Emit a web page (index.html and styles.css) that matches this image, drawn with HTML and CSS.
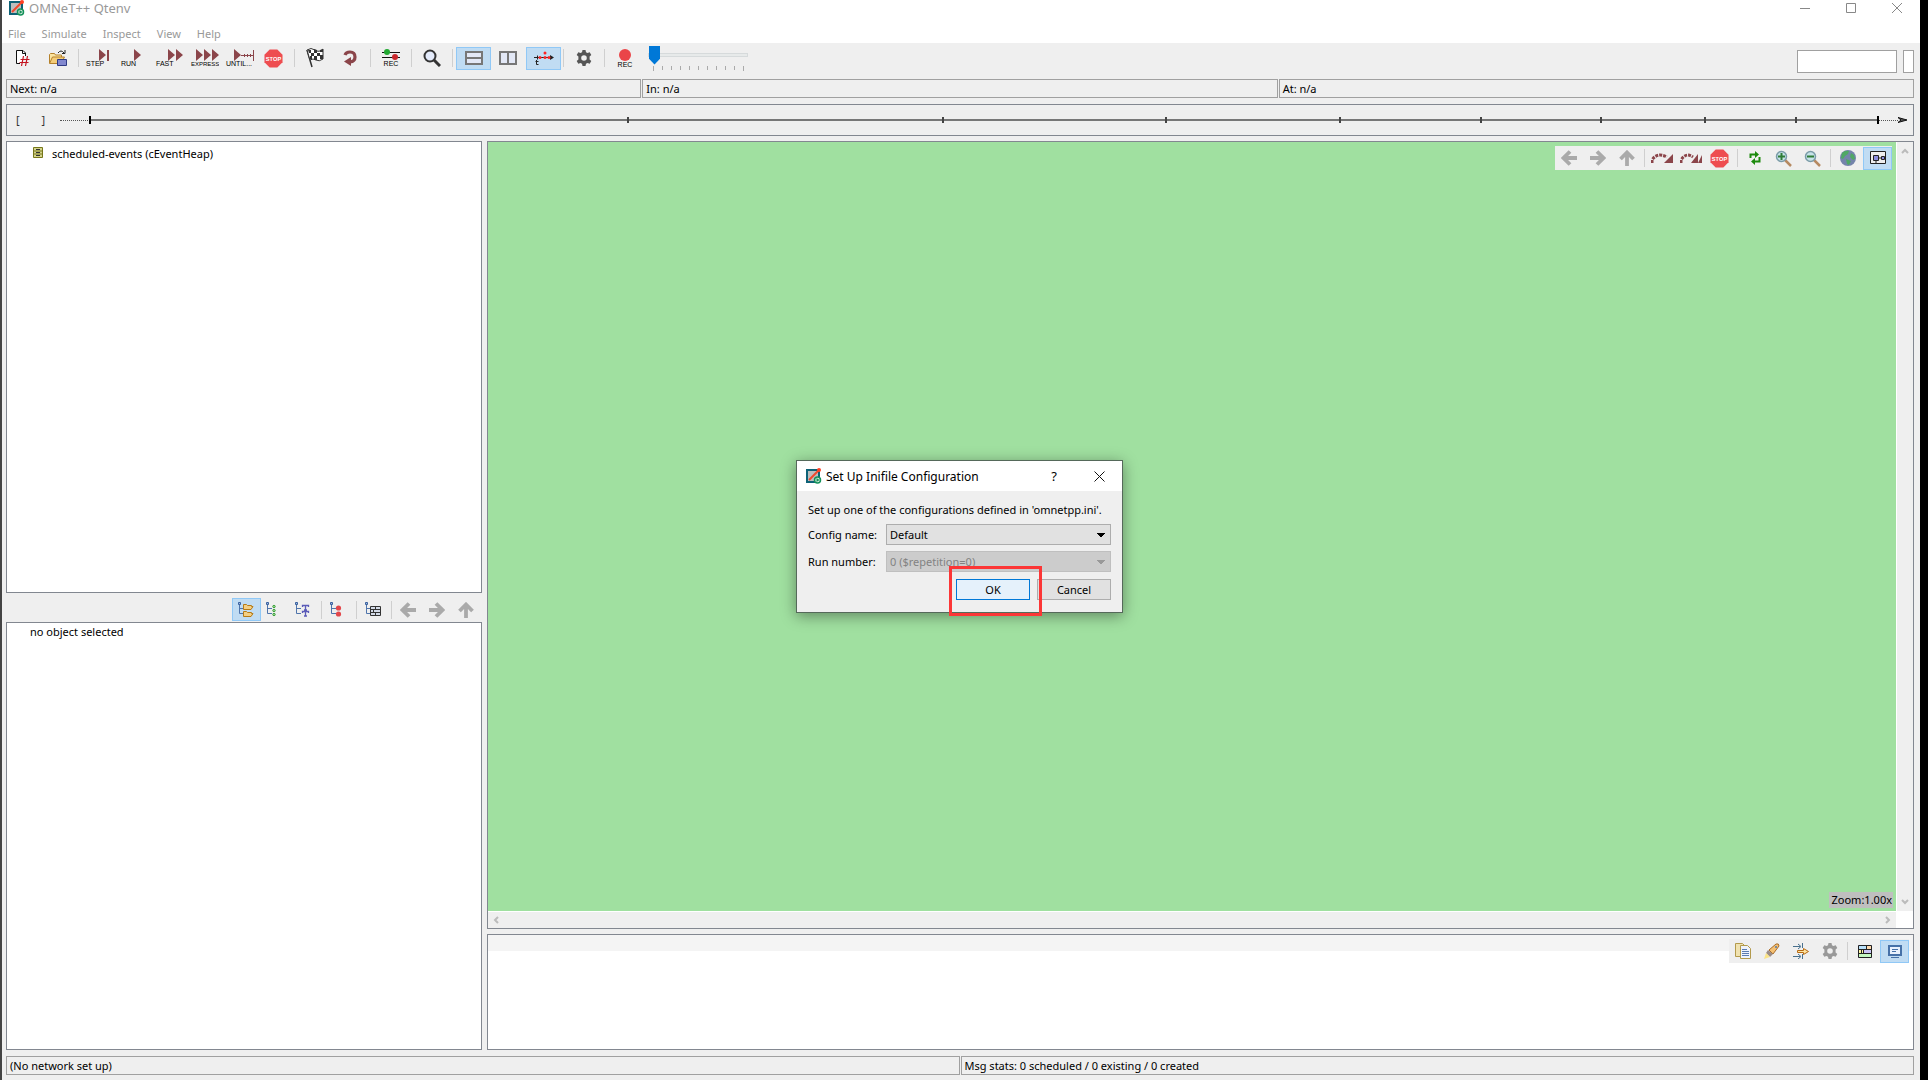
FILE: index.html
```
<!DOCTYPE html>
<html lang="en">
<head>
    <meta charset="UTF-8">
    <meta name="viewport" content="width=device-width, initial-scale=1.0">
    <title>OMNeT++ Qtenv</title>
    <link rel="stylesheet" href="styles.css">
</head>
<body>
    <!-- Icons used more than once -->
    <svg class="sprite" aria-hidden="true">
        <symbol id="app" viewBox="0 0 16 16">
            <path d="M1 2h12v12H1z" fill="#bdbdbd" stroke="#0d6277" stroke-width="2"/>
            <path d="M3 12L8 7l5-5" fill="none" stroke="#f0492c" stroke-width="2"/>
            <circle cx="13" cy="2" r="2" fill="#ff4024"/>
            <circle cx="11.500" cy="12" r="3" fill="#d8eadf" stroke="#14915a" stroke-width="1.500"/>
            <path d="M10.500 10v4l3-2z" fill="#14915a"/>
        </symbol>
        <symbol id="stop" viewBox="0 0 20 20">
            <path d="M6 .5h8l5.500 5.500v8L14 19.500H6L.5 14V6z" fill="#ee4d50"/>
            <text x="10" y="12.500" font-size="6" font-weight="bold" fill="#fff" text-anchor="middle" font-family="Liberation Sans, sans-serif">STOP</text>
        </symbol>
        <symbol id="left" viewBox="0 0 16 16">
            <path d="M9 1.500L2.500 8 9 14.500M3 8h13" fill="none" stroke="#aaa" stroke-width="3.800"/>
        </symbol>
        <symbol id="right" viewBox="0 0 16 16">
            <path d="M7 1.500L13.500 8 7 14.500M13 8H0" fill="none" stroke="#aaa" stroke-width="3.800"/>
        </symbol>
        <symbol id="up" viewBox="0 0 16 16">
            <path d="M1.500 9L8 2.500 14.500 9M8 3v13" fill="none" stroke="#aaa" stroke-width="3.800"/>
        </symbol>
        <symbol id="gear" viewBox="0 0 16 16">
            <path d="M6.500 0h3l.5 2.300 1.500.8 2.200-.8 1.600 2.700-1.700 1.500v3l1.700 1.500-1.600 2.700-2.200-.8-1.500.8-.5 2.300h-3L6 13.700l-1.500-.8-2.200.8L.7 11l1.700-1.500v-3L.7 5l1.600-2.700 2.200.8L6 2.300zM8 5.200a2.800 2.800 0 1 0 0 5.600 2.800 2.800 0 0 0 0-5.600z" fill="currentColor" fill-rule="evenodd"/>
        </symbol>
        <symbol id="tree" viewBox="0 0 10 14">
            <path d="M1.500 2v9.500H6M1.500 6.500H6" fill="none" stroke="#4f74ab"/>
            <path d="M.5.5h2v2h-2z" fill="#9db7dc" stroke="#3b62a0"/>
        </symbol>
    </svg>

    <div class="window">
        <header class="titlebar">
            <svg class="app-icon"><use href="#app"/></svg>
            <h1>OMNeT++ Qtenv</h1>
            <div class="window-buttons">
                <button type="button" aria-label="Minimize"><svg width="10" height="10" viewBox="0 0 10 10"><path d="M0 5.500h10" stroke="#888"/></svg></button>
                <button type="button" aria-label="Maximize"><svg width="10" height="10" viewBox="0 0 10 10"><path d="M.5.5h9v9h-9z" fill="none" stroke="#888"/></svg></button>
                <button type="button" aria-label="Close"><svg width="10" height="10" viewBox="0 0 10 10"><path d="M0 0l10 10M10 0L0 10" stroke="#888"/></svg></button>
            </div>
        </header>

        <nav class="menubar">
            <a href="#">File</a>
            <a href="#">Simulate</a>
            <a href="#">Inspect</a>
            <a href="#">View</a>
            <a href="#">Help</a>
        </nav>

        <div class="toolbar main-toolbar">
            <button type="button" aria-label="New network"><svg width="16" height="18" viewBox="0 0 16 18"><path d="M5 14.500H1.500v-13H8L10.500 4v3" fill="#fff" stroke="#111"/><path d="M7.500 1.500v3h3" fill="none" stroke="#111"/><path d="M8.500 7L6.500 17M12.500 7l-2 10M5.500 10.500h9M4.500 13.500h9" stroke="#c41420" stroke-width="1.200"/></svg></button>
            <button type="button" aria-label="Open ini file"><svg width="18" height="17" viewBox="0 0 18 17"><path d="M.5 13V4.500l1-1h4l1 1.500h6V7" fill="#fbe4a0" stroke="#b5812b"/><path d="M.5 13.500L3.500 7h12L12 13.500z" fill="#f5cd78" stroke="#b5812b"/><path d="M9 3q3-4 6 0M13 3.500h3V0" fill="none" stroke="#222"/><path d="M8.500 9.500h9v6h-9z" fill="#8288cf" stroke="#2f3b84"/></svg></button>
            <span class="sep"></span>
            <button type="button" aria-label="Step"><svg class="run-icon" viewBox="0 0 30 18"><path d="M15 0l7 6-7 6zM23 1h2v11h-2z" fill="#8b454a"/><text x="2" y="17">STEP</text></svg></button>
            <button type="button" aria-label="Run"><svg class="run-icon" viewBox="0 0 30 18"><path d="M15 0l7 6-7 6z" fill="#8b454a"/><text x="2" y="17">RUN</text></svg></button>
            <button type="button" aria-label="Fast"><svg class="run-icon" viewBox="0 0 30 18"><path d="M14 0l7 6-7 6zM22 0l7 6-7 6z" fill="#8b454a"/><text x="2" y="17">FAST</text></svg></button>
            <button type="button" aria-label="Express"><svg class="run-icon" viewBox="0 0 30 18"><path d="M7 0l7 6-7 6zM15 0l7 6-7 6zM23 0l7 6-7 6z" fill="#8b454a"/><text class="small" x="2" y="17">EXPRESS</text></svg></button>
            <button type="button" aria-label="Run until"><svg class="run-icon" viewBox="0 0 30 18"><path d="M10 0l7 6-7 6zM29 1h1v11h-1z" fill="#8b454a"/><path d="M17 6.500h12M20.500 5v3M23.500 5v3M26.500 5v3" stroke="#8b454a"/><text x="2" y="17">UNTIL...</text></svg></button>
            <button type="button" aria-label="Stop"><svg width="19" height="19"><use href="#stop"/></svg></button>
            <span class="sep"></span>
            <button type="button" aria-label="Finish"><svg width="18" height="20" viewBox="0 0 18 20"><path d="M1 2l5 17" stroke="#333" stroke-width="1.500"/><path d="M1 2q4-3 8 0t8-1v10q-4 3-7 1t-6 0z" fill="#fff" stroke="#333"/><path d="M2 2h3v3H3zM8 1l3 1v3H8zM14 2l3-1v3h-3zM5 5h3v3H5zM11 5h3v3h-3zM4 8h2v3H4zM8 8h3v4H8zM14 7h3v4h-3z" fill="#333"/></svg></button>
            <button type="button" aria-label="Rebuild network"><svg width="14" height="16" viewBox="0 0 14 16"><path d="M2 5q1-3 5-3 5 0 5 5 0 4.500-5 5" fill="none" stroke="#8b454a" stroke-width="3.200"/><path d="M8 7v9l-7-4.500z" fill="#8b454a"/></svg></button>
            <span class="sep"></span>
            <button type="button" aria-label="Eventlog settings"><svg width="18" height="20" viewBox="0 0 18 20"><path d="M0 4.500h18M0 9.500h18" stroke="#111"/><circle cx="5" cy="4" r="3" fill="#22a932"/><circle cx="13" cy="9" r="3" fill="#c9282d"/><text class="icon-text" x="9" y="18" text-anchor="middle">REC</text></svg></button>
            <span class="sep"></span>
            <button type="button" aria-label="Find"><svg width="18" height="18" viewBox="0 0 18 18"><circle cx="7" cy="7" r="5.500" fill="#e4ebfb" stroke="#333" stroke-width="2"/><path d="M11 11l6 6" stroke="#333" stroke-width="3"/></svg></button>
            <span class="sep"></span>
            <button type="button" class="active" aria-label="Horizontal layout"><svg width="18" height="14" viewBox="0 0 18 14"><path d="M1 1h16v12H1zM1 7h16" fill="#e3e8f6" stroke="#777" stroke-width="2"/></svg></button>
            <button type="button" aria-label="Vertical layout"><svg width="18" height="14" viewBox="0 0 18 14"><path d="M1 1h16v12H1zM9 1v12" fill="#e3e8f6" stroke="#777" stroke-width="2"/></svg></button>
            <button type="button" class="active" aria-label="Timeline"><svg width="20" height="14" viewBox="0 0 20 14"><path d="M0 6.500h17" stroke="#222"/><path d="M16 4l4 2.500-4 2.500z" fill="#222"/><circle cx="6" cy="6.500" r="1.500" fill="#f22"/><circle cx="11" cy="6.500" r="1.500" fill="#f22"/><circle cx="15" cy="6.500" r="1.500" fill="#f22"/><circle cx="11" cy="2" r="1.500" fill="#f22"/><path d="M3.500 4.500v4M1.500 10.500h3M2.500 9v4.500h2" fill="none" stroke="#222"/></svg></button>
            <span class="sep"></span>
            <button type="button" class="dark" aria-label="Preferences"><svg width="16" height="16"><use href="#gear"/></svg></button>
            <span class="sep"></span>
            <button type="button" aria-label="Record video"><svg width="18" height="20" viewBox="0 0 18 20"><circle cx="9" cy="7" r="6" fill="#ea4548"/><text class="icon-text" x="9" y="19" text-anchor="middle">REC</text></svg></button>
            <div class="speed">
                <input type="range" min="0" max="10" value="0" aria-label="Animation speed">
                <svg width="92" height="5" viewBox="0 0 92 5"><path d="M.5 0v5M9.500 0v4M18.500 0v4M27.500 0v4M36.500 0v4M45.500 0v4M54.500 0v4M63.500 0v4M72.500 0v4M81.500 0v4M90.500 0v5" stroke="#aaa"/></svg>
            </div>
            <input type="text" class="sim-time" aria-label="Simulation time">
            <input type="text" class="event-no" aria-label="Event number">
        </div>

        <div class="status-row next-event">
            <div>Next: n/a</div>
            <div>In: n/a</div>
            <div>At: n/a</div>
        </div>

        <div class="timeline">
            <div class="brackets"><span>[</span><span>]</span></div>
            <span class="dots"></span>
            <div class="axis">
                <i class="end" style="left: 0%"></i>
                <i style="left: 30.1%"></i>
                <i style="left: 47.7%"></i>
                <i style="left: 60.2%"></i>
                <i style="left: 69.9%"></i>
                <i style="left: 77.8%"></i>
                <i style="left: 84.5%"></i>
                <i style="left: 90.3%"></i>
                <i style="left: 95.4%"></i>
                <i class="end" style="left: 100%"></i>
            </div>
            <span class="dots short"></span>
            <svg width="10" height="6" viewBox="0 0 10 6"><path d="M0 .5L9 3 0 5.500 3 3z" fill="#555" stroke="#111"/></svg>
        </div>

        <main class="panes">
            <aside class="side">
                <section class="panel object-tree">
                    <svg width="10" height="11" viewBox="0 0 10 11"><path d="M.5.5h9v10h-9zM0 4h10M0 7h10" fill="#d4d48c" stroke="#77771a"/><path d="M3 2.500h4M3 5.500h4M3 8.500h4" stroke="#333"/></svg>
                    <span>scheduled-events (cEventHeap)</span>
                </section>
                <div class="toolbar mini side-toolbar">
                    <button type="button" class="active" aria-label="Grouped"><svg width="16" height="16" viewBox="0 0 16 16"><use href="#tree" width="10" height="14"/><path d="M5.500 7.500v-5h3l1 1h4v1h1.500l-2 3zM5.500 14.500v-5h3l1 1h4v1h1.500l-2 3z" fill="#f4cf83" stroke="#b57a16"/></svg></button>
                    <button type="button" aria-label="Children"><svg width="16" height="16" viewBox="0 0 16 16"><use href="#tree" width="10" height="14"/><g fill="#a8e0a0" stroke="#369c36"><circle cx="8" cy="4.500" r="1.200"/><circle cx="8" cy="8.500" r="1.200"/><circle cx="8" cy="12.500" r="1.200"/></g></svg></button>
                    <button type="button" aria-label="Inheritance"><svg width="16" height="16" viewBox="0 0 16 16"><use href="#tree" width="10" height="14"/><path d="M7.500 5V3.500h6V5M10.500 3v5M9 8h3M7.500 11V9.500h6V11M10.500 9v5M9 14h3" fill="none" stroke="#5b5bb8" stroke-width="1.300"/></svg></button>
                    <span class="sep"></span>
                    <button type="button" aria-label="Flat"><svg width="16" height="16" viewBox="0 0 16 16"><use href="#tree" width="10" height="14"/><circle cx="8.500" cy="6" r="2.600" fill="#e3474b"/><circle cx="8.500" cy="12" r="2.600" fill="#e3474b"/></svg></button>
                    <span class="sep"></span>
                    <button type="button" aria-label="Table"><svg width="16" height="16" viewBox="0 0 16 16"><use href="#tree" width="10" height="14"/><path d="M5.500 4.500h10v9h-10zM5 7.500h11M5 10.500h11M10.500 4v3M8.500 7v3M10.500 10v4" fill="#d4dbe8" stroke="#333"/></svg></button>
                    <span class="sep"></span>
                    <button type="button" aria-label="Back"><svg width="16" height="16"><use href="#left"/></svg></button>
                    <button type="button" aria-label="Forward"><svg width="16" height="16"><use href="#right"/></svg></button>
                    <button type="button" aria-label="Parent"><svg width="16" height="16"><use href="#up"/></svg></button>
                </div>
                <section class="panel inspector">no object selected</section>
            </aside>

            <div class="content">
                <section class="panel network">
                    <div class="canvas">
                        <div class="toolbar mini floating">
                            <button type="button" aria-label="Back"><svg width="16" height="16"><use href="#left"/></svg></button>
                            <button type="button" aria-label="Forward"><svg width="16" height="16"><use href="#right"/></svg></button>
                            <button type="button" aria-label="Parent"><svg width="16" height="16"><use href="#up"/></svg></button>
                            <span class="sep"></span>
                            <button type="button" aria-label="Run until next event"><svg width="22" height="12" viewBox="0 0 22 12"><path d="M1 11V8q5-8 15-3" fill="none" stroke="#8b454a" stroke-width="3" stroke-dasharray="3 1"/><path d="M22 2v9h-9z" fill="#8b454a"/></svg></button>
                            <button type="button" aria-label="Fast run until next event"><svg width="22" height="12" viewBox="0 0 22 12"><path d="M1 11V8q5-8 12-3" fill="none" stroke="#8b454a" stroke-width="3" stroke-dasharray="3 1"/><path d="M18 2v9h-7zM22 3v8h-4z" fill="#8b454a"/></svg></button>
                            <button type="button" aria-label="Stop"><svg width="19" height="19"><use href="#stop"/></svg></button>
                            <span class="sep"></span>
                            <button type="button" aria-label="Re-layout"><svg width="12" height="14" viewBox="0 0 12 14"><path d="M1.500 7V3.500H7M10.500 6v4.500H5" fill="none" stroke="#1d8a0d" stroke-width="2"/><path d="M6 0l4 3.500L6 7zM6 7v7l-4-3.500z" fill="#1d8a0d"/></svg></button>
                            <button type="button" aria-label="Zoom in"><svg width="17" height="17" viewBox="0 0 17 17"><path d="M10 10l6 6" stroke="#b68a62" stroke-width="2.500"/><circle cx="6.500" cy="6.500" r="5" fill="#c6e2e8" stroke="#7b9ca8" stroke-width="1.500"/><path d="M3 6.500h7M6.500 3v7" stroke="#2f7c37" stroke-width="2"/></svg></button>
                            <button type="button" aria-label="Zoom out"><svg width="17" height="17" viewBox="0 0 17 17"><path d="M10 10l6 6" stroke="#b68a62" stroke-width="2.500"/><circle cx="6.500" cy="6.500" r="5" fill="#c6e2e8" stroke="#7b9ca8" stroke-width="1.500"/><path d="M3 6.500h7" stroke="#2f7c37" stroke-width="2"/></svg></button>
                            <span class="sep"></span>
                            <button type="button" aria-label="3D view"><svg width="16" height="16" viewBox="0 0 16 16"><circle cx="8" cy="8" r="8" fill="#7484ab"/><path d="M2 3q3-3 7-2L8 4 5 6 3 9 1 8zM11 3l3 2 1 4-2 1-3-3zM6 9l5 2-2 4-2-1z" fill="#4fa865"/></svg></button>
                            <button type="button" class="active" aria-label="2D view"><svg width="16" height="14" viewBox="0 0 16 14"><path d="M.5.5h15v12h-15z" fill="#eee" stroke="#222"/><path d="M3.500 4.500h5v5h-5zM11.500 5.500h3v3h-3zM9 7h2M6 10v3" fill="#8c8cdf" stroke="#222"/></svg></button>
                        </div>
                        <span class="zoom">Zoom:1.00x</span>
                    </div>
                    <div class="scroll vertical">
                        <svg width="8" height="6" viewBox="0 0 8 6"><path d="M1 5l3-3 3 3" fill="none" stroke="#bbb" stroke-width="2"/></svg>
                        <svg width="8" height="6" viewBox="0 0 8 6"><path d="M1 1l3 3 3-3" fill="none" stroke="#bbb" stroke-width="2"/></svg>
                    </div>
                    <div class="scroll horizontal">
                        <svg width="6" height="8" viewBox="0 0 6 8"><path d="M5 1L2 4l3 3" fill="none" stroke="#bbb" stroke-width="2"/></svg>
                        <svg width="6" height="8" viewBox="0 0 6 8"><path d="M1 1l3 3-3 3" fill="none" stroke="#bbb" stroke-width="2"/></svg>
                    </div>
                </section>
                <section class="panel log">
                    <div class="toolbar mini floating">
                        <button type="button" aria-label="Copy"><svg width="16" height="16" viewBox="0 0 16 16"><path d="M.5.5h7l2 2v11h-9z" fill="#f0e2b0" stroke="#b39a4c"/><path d="M5.500 2.500h7l3 3v10h-10z" fill="#eef3fc" stroke="#b39a4c"/><path d="M7 6.500h5M7 8.500h7M7 10.500h7M7 12.500h7" stroke="#5b7bb0"/></svg></button>
                        <button type="button" aria-label="Find"><svg width="16" height="16" viewBox="0 0 16 16"><path d="M5 7l7-6q3-1 3 2L9 11z" fill="#f5c173" stroke="#a96c28"/><path d="M4 7l5 4-3 3-4-4z" fill="#9b8d88"/><path d="M2 10l4 4-6 2z" fill="#fbe487"/><circle cx="12" cy="4" r="1" fill="#5579a8"/></svg></button>
                        <button type="button" aria-label="Filter"><svg width="16" height="16" viewBox="0 0 16 16"><path d="M0 3.500h7M0 13.500h7M5 1l3 2.500L5 6M5 11l3 2.500L5 16M9.500 0v5M9.500 11v5" fill="none" stroke="#48708d"/><path d="M4.500 7.500h6v-2l5 3-5 3v-2h-6z" fill="#ffe39c" stroke="#b66a14"/></svg></button>
                        <button type="button" class="grey" aria-label="Log settings"><svg width="16" height="16"><use href="#gear"/></svg></button>
                        <span class="sep"></span>
                        <button type="button" aria-label="Messages view"><svg width="14" height="13" viewBox="0 0 14 13"><path d="M0 0h14v13H0z" fill="#ccc5f6"/><path d="M1 1h8v3H1z" fill="#b9e0fa"/><path d="M9 1h4v3H9z" fill="#ffd9ae"/><path d="M1 4h4v4H1z" fill="#fff7a6"/><path d="M1 8h12v4H1z" fill="#c6fac2"/><path d="M.5.5h13v12H.5zM0 4.500h14M0 8.500h14M8.500 1v3M3.500 5v3M5.500 5v3" fill="none" stroke="#222"/></svg></button>
                        <button type="button" class="active" aria-label="Log view"><svg width="14" height="13" viewBox="0 0 14 13"><path d="M1 1h12v9H1z" fill="#e8f1fd" stroke="#4671a8" stroke-width="2"/><path d="M4 4.500h6M4 6.500h4M3 12.500h8" stroke="#4671a8"/></svg></button>
                    </div>
                </section>
            </div>
        </main>

        <footer class="status-row">
            <div>(No network set up)</div>
            <div>Msg stats: 0 scheduled / 0 existing / 0 created</div>
        </footer>
    </div>

    <div class="overlay">
        <form class="dialog" role="dialog" aria-labelledby="dialogTitle">
            <div class="dialog-title">
                <svg class="app-icon"><use href="#app"/></svg>
                <h2 id="dialogTitle">Set Up Inifile Configuration</h2>
                <button type="button" class="help">?</button>
                <button type="button" aria-label="Close"><svg width="11" height="11" viewBox="0 0 11 11"><path d="M.5.5l10 10M10.500.5l-10 10" stroke="#111"/></svg></button>
            </div>
            <div class="dialog-body">
                <p>Set up one of the configurations defined in 'omnetpp.ini'.</p>
                <label for="config">Config name:</label>
                <select id="config">
                    <option>Default</option>
                </select>
                <label for="run">Run number:</label>
                <select id="run" disabled>
                    <option>0 ($repetition=0)</option>
                </select>
                <div class="dialog-buttons">
                    <button type="submit" class="ok">OK</button>
                    <button type="button">Cancel</button>
                </div>
            </div>
        </form>
    </div>
</body>
</html>
```
FILE: styles.css
```
* {
    box-sizing: border-box;
}
body {
    margin: 0;
    height: 100vh;
    padding: 0 8px 0 2px;
    background: linear-gradient(to right, #444 50%, #000 50%);
    font-family: "Noto Sans", "Open Sans", sans-serif;
    font-size: 11px;
    line-height: 17px;
    color: #000;
    overflow: hidden;
}
button, input, select {
    font: inherit;
    color: inherit;
}
button {
    padding: 0;
    border: 0;
    background: none;
}
svg {
    display: block;
    flex: none;
}
h1, h2, p {
    margin: 0;
    font-weight: normal;
}
.sprite {
    display: none;
}
.app-icon {
    width: 16px;
    height: 16px;
}
.window {
    display: flex;
    flex-direction: column;
    height: 100%;
    padding-bottom: 5px;
    background: #efefef;
}

/* Title and menu */
.titlebar {
    display: flex;
    align-items: flex-start;
    gap: 4px;
    height: 24px;
    padding-left: 7px;
    background: #fff;
    color: #999;
}
.titlebar h1 {
    flex: 1;
    font-size: 13px;
    line-height: 16px;
}
.window-buttons {
    display: flex;
}
.window-buttons button {
    display: grid;
    place-items: center;
    width: 46px;
    height: 15px;
}
.menubar {
    display: flex;
    gap: 16px;
    height: 19px;
    padding: 1px 6px;
    background: #fff;
}
.menubar a {
    color: #999;
    text-decoration: none;
}

/* Toolbars */
.toolbar {
    display: flex;
    align-items: center;
}
.toolbar button {
    display: grid;
    place-items: center;
    flex: none;
    width: 35px;
    height: 23px;
    padding-right: 2px;
}
.toolbar.mini button {
    width: 29px;
}
.toolbar .active {
    padding: 0;
    background: #c0dcf3;
    border: 1px solid #90c8f6;
}
.toolbar .dark {
    color: #555;
}
.toolbar .grey {
    color: #999;
}
.sep {
    flex: none;
    width: 1px;
    height: 18px;
    margin: 0 3px 0 2px;
    background: #cfcfcf;
}
.main-toolbar {
    height: 36px;
    padding: 0 6px 6px 4px;
}
.run-icon {
    width: 30px;
    height: 18px;
}
.run-icon text, .icon-text {
    font-family: "Liberation Sans", sans-serif;
    font-size: 7px;
    fill: #000;
}
.run-icon .small {
    font-size: 6px;
}
.speed {
    display: flex;
    flex-direction: column;
    gap: 2px;
    margin: 0 auto 0 5px;
}
.speed svg {
    margin-left: 5px;
}
.speed input {
    display: block;
    width: 100px;
    height: 19px;
    margin: 0;
    background: none;
    appearance: none;
}
.speed input::-webkit-slider-runnable-track {
    height: 4px;
    border: 1px solid #d6dadb;
    background: #e7eaea;
}
.speed input::-webkit-slider-thumb {
    width: 11px;
    height: 19px;
    margin-top: -8px;
    background: #0078d7;
    clip-path: polygon(0 0, 100% 0, 100% 70%, 50% 100%, 0 70%);
    appearance: none;
}
.sim-time, .event-no {
    align-self: flex-end;
    height: 23px;
    border: 1px solid #a0a0a0;
    background: #fff;
}
.sim-time {
    width: 100px;
    margin-right: 6px;
}
.event-no {
    width: 11px;
    padding: 0;
}

/* Status boxes above and below the panes */
.status-row {
    display: flex;
    gap: 1px;
    margin: 6px 6px 0 4px;
}
.status-row div {
    flex: 1;
    height: 19px;
    padding: 0 3px;
    border: 1px solid #a0a0a0;
}
.next-event {
    margin-top: 0;
}

/* Timeline */
.timeline {
    display: flex;
    align-items: center;
    height: 32px;
    margin: 6px 6px 5px 4px;
    padding: 0 5px 0 9px;
    border: 1px solid #828790;
}
.brackets {
    display: flex;
    justify-content: space-between;
    width: 29px;
    margin-right: 15px;
    padding-bottom: 2px;
    color: #333;
}
.dots {
    width: 30px;
    border-top: 1px dotted #555;
}
.dots.short {
    width: 20px;
}
.axis {
    position: relative;
    flex: 1;
    height: 2px;
    background: #777;
}
.axis i {
    position: absolute;
    top: -2px;
    width: 2px;
    height: 6px;
    margin-left: -1px;
    background: #444;
}
.axis .end {
    top: -3px;
    height: 8px;
    background: #000;
}

/* Panes */
.panes {
    display: flex;
    flex: 1;
    gap: 5px;
    min-height: 0;
    margin: 0 6px 0 4px;
}
.panel {
    border: 1px solid #828790;
    background: #fff;
}
.side {
    display: flex;
    flex-direction: column;
    flex: 1;
}
.object-tree {
    display: flex;
    align-items: flex-start;
    gap: 9px;
    flex: 24;
    padding: 3px 26px;
}
.object-tree svg {
    margin-top: 2px;
}
.side-toolbar {
    justify-content: flex-end;
    height: 29px;
    padding-top: 4px;
}
.inspector {
    flex: 23;
    padding: 0 23px;
}
.content {
    display: flex;
    flex-direction: column;
    flex: 3;
    gap: 5px;
}
.network {
    display: grid;
    grid-template-columns: 1fr 17px;
    grid-template-rows: 1fr 17px;
    flex: 1;
}
.canvas {
    position: relative;
    background: #a0e0a0;
}
.floating {
    position: absolute;
    top: 4px;
    right: 4px;
    height: 24px;
    background: #efefef;
}
.zoom {
    position: absolute;
    right: 3px;
    bottom: 3px;
    padding: 0 1px 0 3px;
    line-height: 16px;
    background: #bfbfbf;
}
.scroll {
    display: flex;
    justify-content: space-between;
    align-items: center;
    background: #efefef;
}
.vertical {
    flex-direction: column;
    padding: 6px 0;
    border-left: 1px solid #fff;
}
.horizontal {
    padding: 0 5px;
    border-top: 1px solid #fff;
}
.log {
    position: relative;
    height: 116px;
    background: linear-gradient(#f4f4f4 16px, #fff 16px);
}

/* Dialog */
.overlay {
    position: absolute;
    inset: 0 9px 7px 0;
    display: grid;
    place-items: center;
}
.dialog {
    width: 327px;
    border: 1px solid #55695a;
    background: #efefef;
    box-shadow: 0 3px 14px rgba(0, 0, 0, 0.4);
}
.dialog-title {
    display: flex;
    align-items: center;
    gap: 4px;
    height: 30px;
    padding-left: 9px;
    background: #fff;
}
.dialog-title h2 {
    flex: 1;
    font-size: 12px;
}
.dialog-title button {
    display: grid;
    place-items: center;
    width: 46px;
    height: 30px;
}
.dialog-title .help {
    width: 36px;
    font-size: 13px;
}
.dialog-body {
    display: grid;
    grid-template-columns: 72px 1fr;
    align-items: center;
    gap: 6px;
    padding: 10px 11px 12px;
}
.dialog-body p {
    grid-column: 1 / 3;
    white-space: nowrap;
}
.dialog-body label {
    white-space: nowrap;
}
.dialog-body select {
    height: 21px;
    padding: 0 3px;
    border: 1px solid #adadad;
    border-radius: 0;
    appearance: none;
    --arrow: #000;
    background: linear-gradient(45deg, transparent 50%, var(--arrow) 50%) no-repeat right 8px center / 4px 4px,
        linear-gradient(-45deg, transparent 50%, var(--arrow) 50%) no-repeat right 4px center / 4px 4px,
        #e1e1e1;
    /* corner triangles that meet in a down arrow */
    background: conic-gradient(from -45deg at 50% 100%, var(--arrow) 90deg, transparent 0) no-repeat right 5px center / 8px 4px, #e1e1e1;
}
.dialog-body select:disabled {
    --arrow: #999;
    border-color: #bfbfbf;
    background-color: #ccc;
    color: #838383;
    opacity: 1;
}
.dialog-buttons {
    grid-column: 1 / 3;
    display: flex;
    justify-content: flex-end;
    gap: 7px;
    padding-top: 1px;
}
.dialog-buttons button {
    position: relative;
    width: 74px;
    height: 21px;
    border: 1px solid #adadad;
    background: #e1e1e1;
}
.dialog-buttons .ok {
    z-index: 1;
    border-color: #0078d7;
    background: #e5f1fb;
}
/* Red marker around the OK button */
.ok::after {
    content: "";
    position: absolute;
    inset: -14px -13px -17px -8px;
    border: 3px solid #fc3636;
    pointer-events: none;
}
```
